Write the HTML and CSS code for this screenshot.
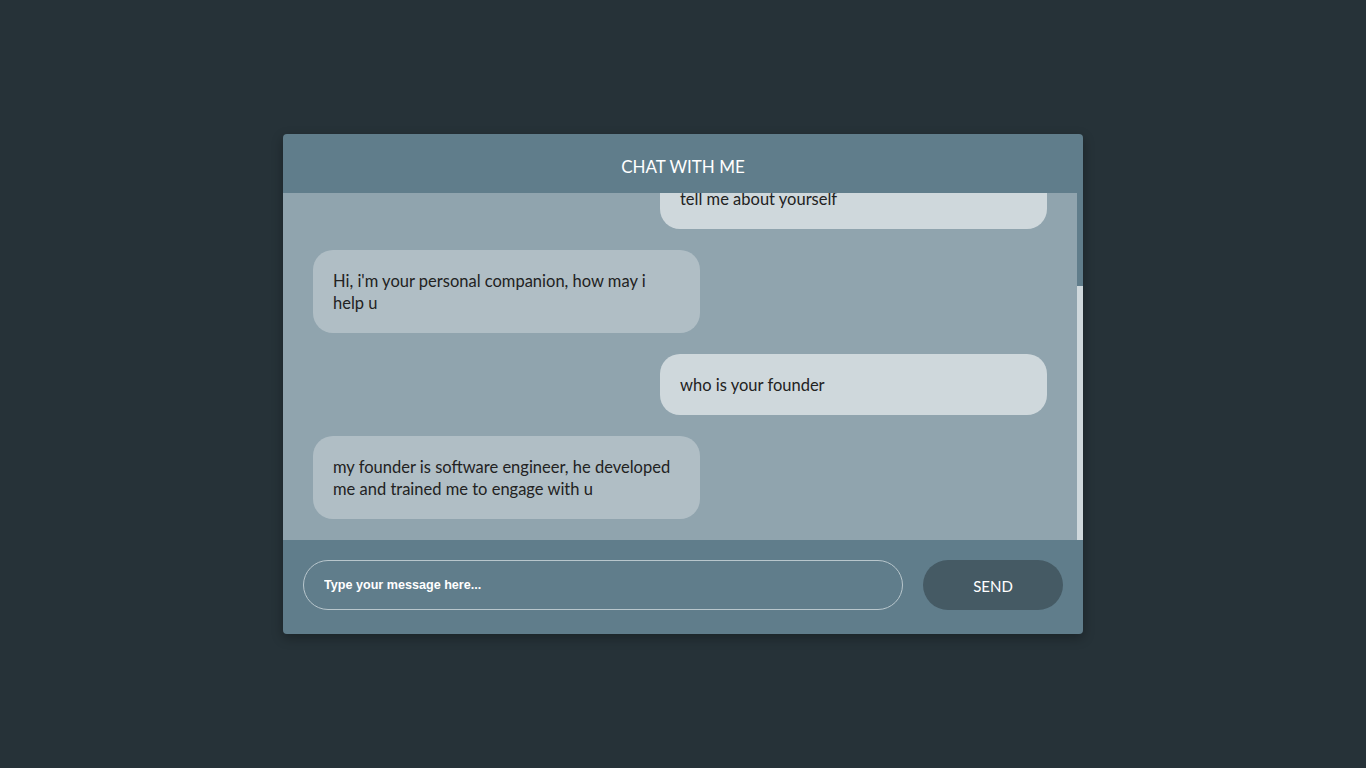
FILE: index.html
```html
<!DOCTYPE html>
<html lang="en">
<head>
<meta charset="utf-8">
<title>Chat with me</title>
<link rel="stylesheet" href="styles.css">
</head>
<body>
<div class="page">
  <div class="chat">
    <div class="chat-header">CHAT WITH ME</div>
    <div class="chat-body">
      <div class="viewport">
        <div class="messages">
          <div class="msg bot">Hello, how can i help you today?</div>
          <div class="msg user">tell me about yourself</div>
          <div class="msg bot">Hi, i'm your personal companion, how may i help u</div>
          <div class="msg user">who is your founder</div>
          <div class="msg bot">my founder is software engineer, he developed me and trained me to engage with u</div>
        </div>
      </div>
      <div class="scrollbar"><div class="scroll-thumb"></div></div>
    </div>
    <div class="chat-footer">
      <input class="chat-input" type="text" placeholder="Type your message here...">
      <button class="send-btn">SEND</button>
    </div>
  </div>
</div>
</body>
</html>
```
FILE: styles.css
```css
html, body {
  margin: 0;
  padding: 0;
  height: 100%;
  background: #263238;
}
.page {
  height: 768px;
  display: flex;
  justify-content: center;
  align-items: center;
}
.chat {
  width: 800px;
  height: 500px;
  border-radius: 4px;
  overflow: hidden;
  display: flex;
  flex-direction: column;
  box-shadow: 0 4px 12px rgba(0,0,0,0.3);
  font-family: Lato, "Open Sans", sans-serif;
}
.chat-header {
  height: 59px;
  box-sizing: border-box;
  padding-top: 5px;
  flex: none;
  background: #607d8b;
  color: #fff;
  font-size: 17px;
  display: flex;
  align-items: center;
  justify-content: center;
}
.chat-body {
  flex: 1;
  min-height: 0;
  background: #90a4ae;
  display: flex;
}
.viewport {
  flex: 1;
  overflow: hidden;
  display: flex;
  flex-direction: column-reverse;
}
.scrollbar {
  width: 6px;
  flex: none;
  background: #607d8b;
  display: flex;
  flex-direction: column;
  justify-content: flex-end;
}
.scroll-thumb {
  height: 254px;
  background: #cfd8dc;
}
.messages {
  display: flex;
  flex-direction: column;
  gap: 21px;
  padding: 20px 30px 21px 30px;
}
.msg {
  width: 347px;
  padding: 19.5px 20px;
  border-radius: 20px;
  font-size: 16.5px;
  font-weight: 400;
  line-height: 22px;
  color: #222;
}
.msg.bot {
  background: #b0bec5;
  align-self: flex-start;
}
.msg.user {
  background: #cfd8dc;
  align-self: flex-end;
}
.chat-footer {
  height: 94px;
  flex: none;
  background: #607d8b;
  display: flex;
  align-items: flex-start;
  gap: 20px;
  padding: 20px 20px 0 20px;
  box-sizing: border-box;
}
.chat-input {
  flex: 1;
  height: 50px;
  box-sizing: border-box;
  border: 1px solid #b8c6cc;
  border-radius: 25px;
  background: transparent;
  padding: 0 20px;
  font-family: "Liberation Sans", Arial, sans-serif;
  font-size: 12.6px;
  font-weight: bold;
  color: #fff;
  outline: none;
}
.chat-input::placeholder {
  color: #fff;
}
.send-btn {
  width: 140px;
  height: 50px;
  padding: 2px 0 0 0;
  border: none;
  border-radius: 25px;
  background: #455a64;
  color: #fff;
  font-family: Lato, "Open Sans", sans-serif;
  font-size: 15px;
  cursor: pointer;
}
```
